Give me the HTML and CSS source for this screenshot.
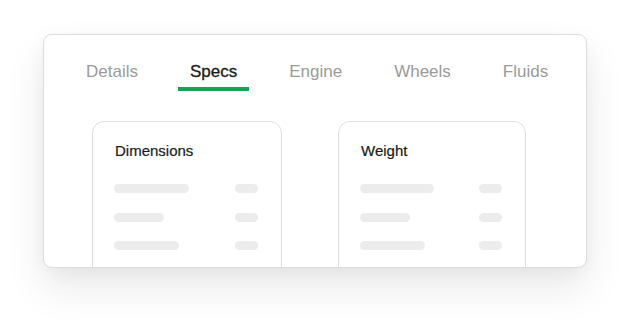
FILE: index.html
```html
<!DOCTYPE html>
<html>
<head>
<meta charset="utf-8">
<link rel="stylesheet" href="styles.css">
</head>
<body>
<div class="panel">
  <nav class="tabs">
    <span class="tab">Details</span>
    <span class="tab active">Specs</span>
    <span class="tab">Engine</span>
    <span class="tab">Wheels</span>
    <span class="tab">Fluids</span>
  </nav>
  <div class="cards">
    <section class="card card-dim">
      <h3 class="card-title">Dimensions</h3>
      <div class="row"><span class="bar" style="width:75px"></span><span class="pill"></span></div>
      <div class="row"><span class="bar" style="width:50px"></span><span class="pill"></span></div>
      <div class="row"><span class="bar" style="width:65px"></span><span class="pill"></span></div>
      <div class="row"><span class="bar" style="width:65px"></span><span class="pill"></span></div>
    </section>
    <section class="card card-weight">
      <h3 class="card-title">Weight</h3>
      <div class="row"><span class="bar" style="width:74px"></span><span class="pill"></span></div>
      <div class="row"><span class="bar" style="width:50px"></span><span class="pill"></span></div>
      <div class="row"><span class="bar" style="width:65px"></span><span class="pill"></span></div>
      <div class="row"><span class="bar" style="width:65px"></span><span class="pill"></span></div>
    </section>
  </div>
</div>
</body>
</html>
```

FILE: styles.css
```css
* { box-sizing: border-box; }
html, body { margin: 0; background: #ffffff; }
body {
  width: 640px;
  height: 330px;
  padding: 34px 0 0 43px;
  font-family: "Liberation Sans", Arial, sans-serif;
  overflow: hidden;
}
.panel {
  width: 544px;
  height: 234px;
  border: 1px solid #dddddd;
  border-radius: 9px;
  background: #ffffff;
  overflow: hidden;
  box-shadow: 0 20px 40px rgba(0,0,0,0.09), 0 4px 18px rgba(0,0,0,0.04);
}
.tabs {
  display: flex;
  gap: 28px;
  padding: 27px 0 0 30px;
}
.tab {
  display: block;
  padding: 0 12px 5px;
  font-size: 17px;
  line-height: 20px;
  color: #9b9b9b;
  border-bottom: 4px solid transparent;
}
.tab.active {
  color: #1b1b1b;
  -webkit-text-stroke: 0.3px #1b1b1b;
  border-bottom-color: #18a152;
}
.cards {
  display: flex;
  gap: 56px;
  padding: 30px 0 0 48px;
}
.card {
  border: 1px solid #dedede;
  border-radius: 12px;
  padding: 20px 23px 0 21px;
  height: 200px;
}
.card-dim { width: 190px; }
.card-weight { width: 188px; }
.card-title {
  margin: 0 0 24px 1px;
  font-size: 15px;
  line-height: 18px;
  font-weight: normal;
  color: #1a1a1a;
  -webkit-text-stroke: 0.2px #1a1a1a;
}
.row {
  display: flex;
  justify-content: space-between;
  align-items: center;
  height: 9px;
  margin-bottom: 19.5px;
}
.bar, .pill {
  display: block;
  height: 9px;
  border-radius: 5px;
  background: #ececec;
}
.pill { width: 23px; }
```
